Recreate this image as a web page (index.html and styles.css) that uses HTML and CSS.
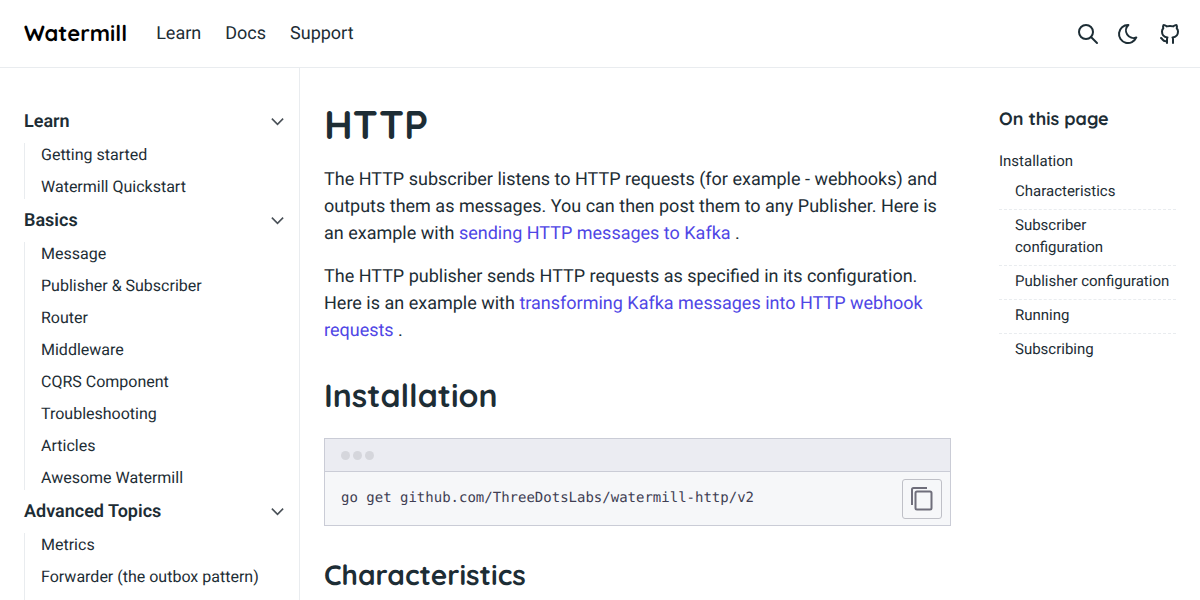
FILE: index.html
```html
<!DOCTYPE html>
<html lang="en">
<head>
  <meta charset="UTF-8">
  <meta name="viewport" content="width=device-width, initial-scale=1.0">
  <title>HTTP | Watermill</title>
  <link rel="stylesheet" href="styles.css">
</head>
<body>
  <header class="navbar">
    <a class="brand" href="#">Watermill</a>
    <nav class="main-nav" aria-label="Main">
      <a href="#">Learn</a>
      <a href="#">Docs</a>
      <a href="#">Support</a>
    </nav>
    <div class="nav-tools">
      <button type="button" aria-label="Search">
        <svg class="icon" viewBox="0 0 24 24"><circle cx="10" cy="10" r="7"/><path d="M21 21l-6-6"/></svg>
      </button>
      <button type="button" aria-label="Toggle theme">
        <svg class="icon" viewBox="0 0 24 24"><path d="M12 3c.132 0 .263 0 .393 0a7.5 7.5 0 0 0 7.92 12.446a9 9 0 1 1 -8.313 -12.454z"/></svg>
      </button>
      <a class="github" href="#" aria-label="GitHub">
        <svg class="icon" viewBox="0 0 24 24"><path d="M9 19c-4.300 1.400-4.300-2.500-6-3m12 5v-3.500c0-1 .1-1.400-.5-2c2.800-.3 5.500-1.400 5.500-6a4.600 4.600 0 0 0-1.300-3.200a4.200 4.200 0 0 0-.1-3.200s-1.100-.3-3.500 1.300a12.300 12.300 0 0 0-6.200 0c-2.400-1.600-3.500-1.300-3.500-1.300a4.200 4.200 0 0 0-.1 3.200a4.600 4.600 0 0 0-1.300 3.200c0 4.600 2.700 5.700 5.500 6c-.6.600-.6 1.200-.5 2v3.500"/></svg>
      </a>
    </div>
  </header>

  <div class="layout">
    <aside class="sidebar">
      <nav aria-label="Docs">
        <details open>
          <summary>Learn <svg class="chevron" viewBox="0 0 16 16"><path d="M2 5l6 6 6-6"/></svg></summary>
          <ul>
            <li><a href="#">Getting started</a></li>
            <li><a href="#">Watermill Quickstart</a></li>
          </ul>
        </details>
        <details open>
          <summary>Basics <svg class="chevron" viewBox="0 0 16 16"><path d="M2 5l6 6 6-6"/></svg></summary>
          <ul>
            <li><a href="#">Message</a></li>
            <li><a href="#">Publisher &amp; Subscriber</a></li>
            <li><a href="#">Router</a></li>
            <li><a href="#">Middleware</a></li>
            <li><a href="#">CQRS Component</a></li>
            <li><a href="#">Troubleshooting</a></li>
            <li><a href="#">Articles</a></li>
            <li><a href="#">Awesome Watermill</a></li>
          </ul>
        </details>
        <details open>
          <summary>Advanced Topics <svg class="chevron" viewBox="0 0 16 16"><path d="M2 5l6 6 6-6"/></svg></summary>
          <ul class="last">
            <li><a href="#">Metrics</a></li>
            <li><a href="#">Forwarder (the outbox pattern)</a></li>
          </ul>
        </details>
      </nav>
    </aside>

    <main class="content">
      <h1>HTTP</h1>
      <p>The HTTP subscriber listens to HTTP requests (for example - webhooks) and outputs them as messages. You can then post them to any Publisher. Here is an example with <a href="#">sending HTTP messages to Kafka</a> .</p>
      <p>The HTTP publisher sends HTTP requests as specified in its configuration. Here is an example with <a href="#">transforming Kafka messages into HTTP webhook requests</a> .</p>

      <h2 id="installation">Installation</h2>
      <div class="code-block">
        <div class="code-header"><span></span><span></span><span></span></div>
        <div class="code-body">
          <pre><code>go get github.com/ThreeDotsLabs/watermill-http/v2</code></pre>
          <button type="button" class="copy" aria-label="Copy to clipboard">
            <svg viewBox="0 0 24 24"><rect x="5.500" y="4.500" width="16" height="18" rx="1.500"/><path d="M2 18V2.500A1.500 1.500 0 0 1 3.500 1H17"/></svg>
          </button>
        </div>
      </div>

      <h3 id="characteristics">Characteristics</h3>
    </main>

    <aside class="toc">
      <h4>On this page</h4>
      <nav aria-label="On this page">
        <a class="toc-top" href="#installation">Installation</a>
        <ul>
          <li><a href="#characteristics">Characteristics</a></li>
          <li><a href="#">Subscriber configuration</a></li>
          <li><a href="#">Publisher configuration</a></li>
          <li><a href="#">Running</a></li>
          <li><a href="#">Subscribing</a></li>
        </ul>
      </nav>
    </aside>
  </div>
</body>
</html>
```
FILE: styles.css
```css
* { box-sizing: border-box; }
body {
  margin: 0;
  font-family: Roboto, sans-serif;
  font-size: 18px;
  line-height: 27px;
  color: #1d2d35;
  background: #fff;
  text-rendering: geometricPrecision;
}
a { color: inherit; text-decoration: none; }
ul { list-style: none; margin: 0; padding: 0; }
button { padding: 0; border: 0; background: none; color: inherit; cursor: pointer; }
h1, h2, h3, h4, .brand { font-family: Quicksand, Lato, sans-serif; font-weight: 700; }

.navbar {
  display: flex;
  align-items: center;
  height: 68px;
  padding: 0 18px 0 24px;
  border-bottom: 1px solid #e9ecef;
}
.brand { font-size: 22px; color: #000; margin-right: 29px; }
.main-nav { display: flex; gap: 24px; }
.nav-tools { display: flex; align-items: center; gap: 16px; margin-left: auto; }
.nav-tools button, .github { display: flex; }
.github { margin-left: 2px; }
.icon {
  width: 24px;
  height: 24px;
  fill: none;
  stroke: currentColor;
  stroke-width: 2;
  stroke-linecap: round;
  stroke-linejoin: round;
}

.layout {
  display: grid;
  grid-template-columns: 300px minmax(0, 1fr) 225px;
}

.sidebar {
  height: calc(100vh - 68px);
  overflow: hidden;
  padding: 32px 14px 0 24px;
  border-right: 1px solid #e9ecef;
}
.sidebar summary {
  display: flex;
  justify-content: space-between;
  align-items: center;
  padding: 8px 0;
  font-weight: 600;
  list-style: none;
  cursor: pointer;
}
.sidebar ul {
  display: flex;
  flex-direction: column;
  gap: 8px;
  padding-left: 16px;
  border-left: 1px solid #e9ecef;
  font-size: 16px;
  line-height: 24px;
}
.sidebar .last { padding-bottom: 24px; }
.chevron { width: 15px; height: 15px; fill: none; stroke: #495057; stroke-width: 1.7; }

.content { padding: 32px 24px 0; }
.content h1 { margin: 0 0 18px; font-size: 40px; line-height: 48px; }
.content p { margin: 0 0 16px; }
.content p a { color: #4f46e5; }
.content h2 { margin: 32px 0 24px; font-size: 32px; line-height: 38px; }
.content h3 { margin: 32px 0 16px; font-size: 28px; line-height: 34px; }

.code-block { border: 1px solid #caccd6; background: #f6f7f9; }
.code-header {
  display: flex;
  align-items: center;
  gap: 3px;
  height: 33px;
  padding-left: 16px;
  border-bottom: 1px solid #caccd6;
  background: #ebecf2;
}
.code-header span { width: 9px; height: 9px; border-radius: 50%; background: #d5d6dc; }
.code-body {
  display: flex;
  justify-content: space-between;
  align-items: flex-start;
  padding: 7px 8px 6px 16px;
}
.code-body pre { margin: 7px 0 0; line-height: 21px; }
.code-body code {
  font-family: "DejaVu Sans Mono", monospace;
  font-size: 14px;
  line-height: 21px;
  color: #403e53;
}
.copy {
  display: flex;
  align-items: center;
  justify-content: center;
  width: 40px;
  height: 40px;
  border: 1px solid #bfc0c7;
  border-radius: 3px;
}
.copy svg {
  width: 24px;
  height: 26px;
  overflow: visible;
  fill: none;
  stroke: #6f6e7b;
  stroke-width: 2;
}

.toc { padding: 36px 24px 0; font-size: 15px; line-height: 22px; }
.toc h4 { margin: 0 0 16px; font-size: 18px; line-height: 30px; }
.toc-top { display: block; }
.toc ul { margin-top: 4px; }
.toc li { padding: 4px 0 7px 16px; border-bottom: 1px dashed #e9ecef; }
.toc li:last-child { border-bottom: 0; }
```
